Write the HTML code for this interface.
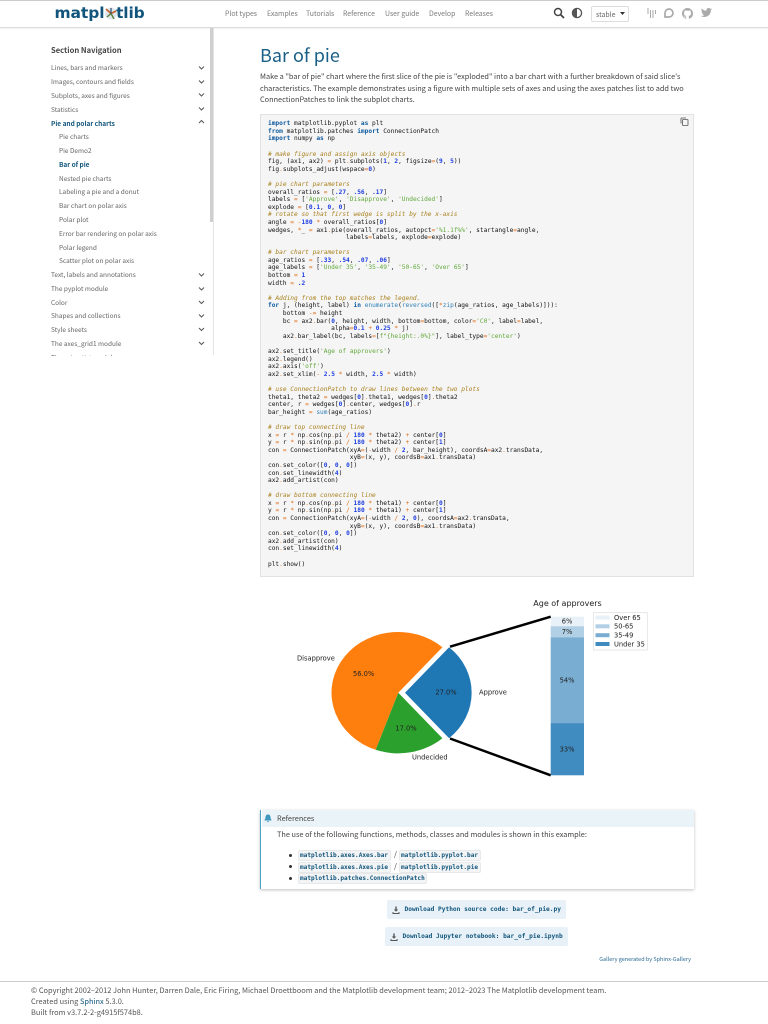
<!DOCTYPE html>
<html lang="en"><head><meta charset="utf-8"><title>Bar of pie</title>
<style>
html,body{margin:0;padding:0;background:#fff}
#p{position:relative;width:768px;height:1024px;overflow:hidden;font-family:"Noto Sans CJK JP","Liberation Sans",sans-serif;color:#444;filter:blur(.3px)}
.a{position:absolute;white-space:nowrap}
.nav{top:6px;height:14px;line-height:14px;font-size:6.9px;color:#7a7a7a}
.s{height:14px;line-height:14px;font-size:6.5px;color:#666;left:51px}
.s2{left:59px}
.t{height:12px;line-height:12px;font-size:7.34px;color:#444}
.f{font-size:7.41px;color:#555}
pre{position:absolute;margin:0;font-family:"DejaVu Sans Mono","Liberation Mono",monospace;font-size:6.18px;line-height:7.586px;color:#111;left:268px;top:120.2px}
.k{color:#0b5a9e;font-weight:bold}.m{color:#1f3fe0;font-weight:bold}.q{color:#62a83c}.c{color:#a9801c;font-style:italic}.o{color:#e0701a}
.chip{position:absolute;height:9px;line-height:9px;background:#f3f4f5;border:.5px solid #e6e8ea;border-radius:2px;font-family:"DejaVu Sans Mono",monospace;font-weight:bold;font-size:6.1px;color:#11557c;padding:0 1.5px;white-space:nowrap}
.dl{position:absolute;background:#e7f1f7;border-radius:2px;font-family:"DejaVu Sans Mono",monospace;font-weight:bold;font-size:6.2px;color:#11557c;white-space:nowrap}
.b{position:absolute;left:289px;width:3px;height:3px;border-radius:50%;background:#333}
</style></head><body><div id="p">

<!-- header -->
<div class="a" style="left:0;top:0;width:768px;height:1px;background:#ccc"></div>
<div class="a" style="left:0;top:27px;width:768px;height:1px;background:#ddd;box-shadow:0 1px 1px #eee"></div>
<div class="a" style="left:54.500px;top:2px;height:22px;line-height:22px;font-family:'DejaVu Sans',sans-serif;font-weight:bold;font-size:15.5px;color:#11557c;letter-spacing:-.1px">matpl<span style="display:inline-block;width:11.500px"></span>tlib</div>
<svg class="a" style="left:103.500px;top:6px" width="14" height="15" viewBox="0 0 14 15"><circle cx="7" cy="7.500" r="6" fill="#dfe8ee"/><path d="M7 7.500L2 3M7 7.500L12 5" stroke="#c4622c" stroke-width="1.600"/><path d="M7 7.500L10 13M7 7.500L3 11" stroke="#5b7f3c" stroke-width="1.400"/><path d="M7 7.500L7 2" stroke="#2d4c70" stroke-width="1.200"/></svg>

<div class="a nav" style="left:225px">Plot types</div>
<div class="a nav" style="left:267px">Examples</div>
<div class="a nav" style="left:306px">Tutorials</div>
<div class="a nav" style="left:343px">Reference</div>
<div class="a nav" style="left:385px">User guide</div>
<div class="a nav" style="left:429px">Develop</div>
<div class="a nav" style="left:465px">Releases</div>

<svg class="a" style="left:553px;top:7px" width="12" height="12" viewBox="0 0 12 12"><circle cx="5" cy="5" r="3.500" fill="none" stroke="#444" stroke-width="1.500"/><path d="M7.600 7.600L11 11" stroke="#444" stroke-width="1.800"/></svg>
<svg class="a" style="left:571px;top:7px" width="12" height="12" viewBox="0 0 12 12"><circle cx="6" cy="6" r="4.600" fill="none" stroke="#555" stroke-width="1.300"/><path d="M6 1.400A4.600 4.600 0 0 0 6 10.600Z" fill="#555"/></svg>
<div class="a" style="left:591px;top:6px;width:36px;height:14px;border:1px solid #ddd;border-radius:2px;line-height:14px;font-size:6.900px;color:#666;text-indent:4px">stable</div>
<svg class="a" style="left:620px;top:12px" width="5" height="3"><path d="M0 0H5L2.500 3Z" fill="#333"/></svg>

<svg class="a" style="left:647px;top:7px" width="10" height="11" viewBox="0 0 10 11" fill="#aaa"><rect x="0.500" y="1" width="1" height="6"/><rect x="3" y="3" width="1" height="8"/><rect x="5.500" y="3" width="1" height="8"/><rect x="8" y="3" width="1" height="4"/></svg>
<svg class="a" style="left:664px;top:8px" width="10" height="10" viewBox="0 0 10 10"><path d="M5 1A4 4 0 1 1 5 9H1V5A4 4 0 0 1 5 1Z" fill="none" stroke="#aaa" stroke-width="1.700"/></svg>
<svg class="a" style="left:682px;top:8px" width="11" height="11" viewBox="0 0 16 16"><path fill="#aaa" d="M8 0C3.58 0 0 3.58 0 8c0 3.54 2.29 6.53 5.47 7.59.4.07.55-.17.55-.38 0-.19-.01-.82-.01-1.49-2.01.37-2.53-.49-2.69-.94-.09-.23-.48-.94-.82-1.13-.28-.15-.68-.52-.01-.53.63-.01 1.08.58 1.23.82.72 1.21 1.87.87 2.33.66.07-.52.28-.87.51-1.07-1.78-.2-3.64-.89-3.64-3.95 0-.87.31-1.59.82-2.15-.08-.2-.36-1.02.08-2.12 0 0 .67-.21 2.2.82.64-.18 1.32-.27 2-.27s1.36.09 2 .27c1.53-1.04 2.2-.82 2.2-.82.44 1.1.16 1.92.08 2.12.51.56.82 1.27.82 2.15 0 3.07-1.87 3.75-3.65 3.95.29.25.54.73.54 1.48 0 1.07-.01 1.93-.01 2.2 0 .21.15.46.55.38A8.01 8.01 0 0016 8c0-4.42-3.58-8-8-8z"/></svg>
<svg class="a" style="left:701px;top:7px" width="11" height="11" viewBox="0 0 512 512"><path fill="#aaa" d="M459.37 151.716c.325 4.548.325 9.097.325 13.645 0 138.72-105.583 298.558-298.558 298.558-59.452 0-114.68-17.219-161.137-47.106 8.447.974 16.568 1.299 25.34 1.299 49.055 0 94.213-16.568 130.274-44.832-46.132-.975-84.792-31.188-98.112-72.772 6.498.974 12.995 1.624 19.818 1.624 9.421 0 18.843-1.3 27.614-3.573-48.081-9.747-84.143-51.98-84.143-102.985v-1.299c13.969 7.797 30.214 12.67 47.431 13.319-28.264-18.843-46.781-51.005-46.781-87.391 0-19.492 5.197-37.36 14.294-52.954 51.655 63.675 129.3 105.258 216.365 109.807-1.624-7.797-2.599-15.918-2.599-24.04 0-57.828 46.782-104.934 104.934-104.934 30.213 0 57.502 12.67 76.67 33.137 23.715-4.548 46.456-13.32 66.599-25.34-7.798 24.366-24.366 44.833-46.132 57.827 21.117-2.273 41.584-8.122 60.426-16.243-14.292 20.791-32.161 39.308-52.628 54.253z"/></svg>

<!-- sidebar -->
<div class="a" style="left:213px;top:28px;width:1px;height:327px;background:#e4e4e4"></div>
<div class="a" style="left:210px;top:28px;width:3px;height:194px;background:#cfcfcf"></div>
<div class="a" style="left:51px;top:44px;height:14px;line-height:14px;font-size:7.600px;font-weight:bold;color:#444">Section Navigation</div>

<div class="a" style="left:0;top:60px;width:213px;height:296px;overflow:hidden">
<div class="a s" style="top:0.2px">Lines, bars and markers</div>
<div class="a s" style="top:13.800px">Images, contours and fields</div>
<div class="a s" style="top:27.800px">Subplots, axes and figures</div>
<div class="a s" style="top:41.500px">Statistics</div>
<div class="a s" style="top:55.500px;color:#11557c;font-weight:bold">Pie and polar charts</div>
<div class="a s s2" style="top:69.200px">Pie charts</div>
<div class="a s s2" style="top:83.200px">Pie Demo2</div>
<div class="a s s2" style="top:96.800px;color:#11557c;font-weight:bold">Bar of pie</div>
<div class="a s s2" style="top:110.500px">Nested pie charts</div>
<div class="a s s2" style="top:124.200px">Labeling a pie and a donut</div>
<div class="a s s2" style="top:138.200px">Bar chart on polar axis</div>
<div class="a s s2" style="top:151.800px">Polar plot</div>
<div class="a s s2" style="top:165.800px">Error bar rendering on polar axis</div>
<div class="a s s2" style="top:179.500px">Polar legend</div>
<div class="a s s2" style="top:192.500px">Scatter plot on polar axis</div>
<div class="a s" style="top:206.800px">Text, labels and annotations</div>
<div class="a s" style="top:220.800px">The pyplot module</div>
<div class="a s" style="top:234.500px">Color</div>
<div class="a s" style="top:247.500px">Shapes and collections</div>
<div class="a s" style="top:262px">Style sheets</div>
<div class="a s" style="top:276px">The axes_grid1 module</div>
<div class="a s" style="top:289.500px">The axisartist module</div>
</div>
<svg class="a" style="left:0;top:0" width="214" height="356" fill="none" stroke="#555" stroke-width="1">
<path d="M199 66.500l2.500 2.500 2.500-2.500M199 80.500l2.500 2.500 2.500-2.500M199 93.500l2.500 2.500 2.500-2.500M199 107.500l2.500 2.500 2.500-2.500M199 123l2.500-2.500 2.500 2.500M199 273.500l2.500 2.500 2.500-2.500M199 287.500l2.500 2.500 2.500-2.500M199 301l2.500 2.500 2.500-2.500M199 314.500l2.500 2.500 2.500-2.500M199 328l2.500 2.500 2.500-2.500M199 342l2.500 2.500 2.500-2.500"/>
</svg>

<!-- main -->
<div class="a" style="left:260px;top:42px;height:26px;line-height:26px;font-size:18px;color:#1a5f87">Bar of pie</div>
<div class="a t" style="left:260px;top:70.500px">Make a "bar of pie" chart where the first slice of the pie is "exploded" into a bar chart with a further breakdown of said slice's</div>
<div class="a t" style="left:260px;top:82.500px">characteristics. The example demonstrates using a figure with multiple sets of axes and using the axes patches list to add two</div>
<div class="a t" style="left:260px;top:94px">ConnectionPatches to link the subplot charts.</div>

<!-- code -->
<div class="a" style="left:260px;top:114px;width:432px;height:461px;background:#f5f5f5;border:1px solid #e2e2e2"></div>
<svg class="a" style="left:680px;top:117px" width="9" height="9" viewBox="0 0 9 9" fill="none" stroke="#555" stroke-width=".8"><rect x="2.500" y="2.500" width="5.500" height="6" rx=".6" fill="#f5f5f5"/><path d="M1 6.500V1.500a.5 .5 0 0 1 .5-.5H6"/></svg>
<pre><span class="k">import</span> matplotlib.pyplot <span class="k">as</span> plt
<span class="k">from</span> matplotlib.patches <span class="k">import</span> ConnectionPatch
<span class="k">import</span> numpy <span class="k">as</span> np

<span class="c"># make figure and assign axis objects</span>
fig, (ax1, ax2) <span class="o">=</span> plt<span class="o">.</span>subplots(<span class="m">1</span>, <span class="m">2</span>, figsize<span class="o">=</span>(<span class="m">9</span>, <span class="m">5</span>))
fig<span class="o">.</span>subplots_adjust(wspace<span class="o">=</span><span class="m">0</span>)

<span class="c"># pie chart parameters</span>
overall_ratios <span class="o">=</span> [<span class="m">.27</span>, <span class="m">.56</span>, <span class="m">.17</span>]
labels <span class="o">=</span> [<span class="q">'Approve'</span>, <span class="q">'Disapprove'</span>, <span class="q">'Undecided'</span>]
explode <span class="o">=</span> [<span class="m">0.1</span>, <span class="m">0</span>, <span class="m">0</span>]
<span class="c"># rotate so that first wedge is split by the x-axis</span>
angle <span class="o">=</span> <span class="o">-</span><span class="m">180</span> <span class="o">*</span> overall_ratios[<span class="m">0</span>]
wedges, <span class="o">*</span>_ <span class="o">=</span> ax1<span class="o">.</span>pie(overall_ratios, autopct<span class="o">=</span><span class="q">'%1.1f%%'</span>, startangle<span class="o">=</span>angle,
                     labels<span class="o">=</span>labels, explode<span class="o">=</span>explode)

<span class="c"># bar chart parameters</span>
age_ratios <span class="o">=</span> [<span class="m">.33</span>, <span class="m">.54</span>, <span class="m">.07</span>, <span class="m">.06</span>]
age_labels <span class="o">=</span> [<span class="q">'Under 35'</span>, <span class="q">'35-49'</span>, <span class="q">'50-65'</span>, <span class="q">'Over 65'</span>]
bottom <span class="o">=</span> <span class="m">1</span>
width <span class="o">=</span> <span class="m">.2</span>

<span class="c"># Adding from the top matches the legend.</span>
<span class="k">for</span> j, (height, label) <span class="k">in</span> <span style="color:#2f7fb8">enumerate</span>(<span style="color:#2f7fb8">reversed</span>([<span class="o">*</span><span style="color:#2f7fb8">zip</span>(age_ratios, age_labels)])):
    bottom <span class="o">-=</span> height
    bc <span class="o">=</span> ax2<span class="o">.</span>bar(<span class="m">0</span>, height, width, bottom<span class="o">=</span>bottom, color<span class="o">=</span><span class="q">'C0'</span>, label<span class="o">=</span>label,
                 alpha<span class="o">=</span><span class="m">0.1</span> <span class="o">+</span> <span class="m">0.25</span> <span class="o">*</span> j)
    ax2<span class="o">.</span>bar_label(bc, labels<span class="o">=</span>[<span class="q">f"{height:.0%}"</span>], label_type<span class="o">=</span><span class="q">'center'</span>)

ax2<span class="o">.</span>set_title(<span class="q">'Age of approvers'</span>)
ax2<span class="o">.</span>legend()
ax2<span class="o">.</span>axis(<span class="q">'off'</span>)
ax2<span class="o">.</span>set_xlim(<span class="o">-</span> <span class="m">2.5</span> <span class="o">*</span> width, <span class="m">2.5</span> <span class="o">*</span> width)

<span class="c"># use ConnectionPatch to draw lines between the two plots</span>
theta1, theta2 <span class="o">=</span> wedges[<span class="m">0</span>]<span class="o">.</span>theta1, wedges[<span class="m">0</span>]<span class="o">.</span>theta2
center, r <span class="o">=</span> wedges[<span class="m">0</span>]<span class="o">.</span>center, wedges[<span class="m">0</span>]<span class="o">.</span>r
bar_height <span class="o">=</span> <span style="color:#2f7fb8">sum</span>(age_ratios)

<span class="c"># draw top connecting line</span>
x <span class="o">=</span> r <span class="o">*</span> np<span class="o">.</span>cos(np<span class="o">.</span>pi <span class="o">/</span> <span class="m">180</span> <span class="o">*</span> theta2) <span class="o">+</span> center[<span class="m">0</span>]
y <span class="o">=</span> r <span class="o">*</span> np<span class="o">.</span>sin(np<span class="o">.</span>pi <span class="o">/</span> <span class="m">180</span> <span class="o">*</span> theta2) <span class="o">+</span> center[<span class="m">1</span>]
con <span class="o">=</span> ConnectionPatch(xyA<span class="o">=</span>(<span class="o">-</span>width <span class="o">/</span> <span class="m">2</span>, bar_height), coordsA<span class="o">=</span>ax2<span class="o">.</span>transData,
                      xyB<span class="o">=</span>(x, y), coordsB<span class="o">=</span>ax1<span class="o">.</span>transData)
con<span class="o">.</span>set_color([<span class="m">0</span>, <span class="m">0</span>, <span class="m">0</span>])
con<span class="o">.</span>set_linewidth(<span class="m">4</span>)
ax2<span class="o">.</span>add_artist(con)

<span class="c"># draw bottom connecting line</span>
x <span class="o">=</span> r <span class="o">*</span> np<span class="o">.</span>cos(np<span class="o">.</span>pi <span class="o">/</span> <span class="m">180</span> <span class="o">*</span> theta1) <span class="o">+</span> center[<span class="m">0</span>]
y <span class="o">=</span> r <span class="o">*</span> np<span class="o">.</span>sin(np<span class="o">.</span>pi <span class="o">/</span> <span class="m">180</span> <span class="o">*</span> theta1) <span class="o">+</span> center[<span class="m">1</span>]
con <span class="o">=</span> ConnectionPatch(xyA<span class="o">=</span>(<span class="o">-</span>width <span class="o">/</span> <span class="m">2</span>, <span class="m">0</span>), coordsA<span class="o">=</span>ax2<span class="o">.</span>transData,
                      xyB<span class="o">=</span>(x, y), coordsB<span class="o">=</span>ax1<span class="o">.</span>transData)
con<span class="o">.</span>set_color([<span class="m">0</span>, <span class="m">0</span>, <span class="m">0</span>])
ax2<span class="o">.</span>add_artist(con)
con<span class="o">.</span>set_linewidth(<span class="m">4</span>)

plt<span class="o">.</span>show()</pre>

<!-- chart -->
<svg class="a" style="left:0;top:590px" width="768" height="200" viewBox="0 590 768 200" font-family="'DejaVu Sans',sans-serif" fill="#222">
<path d="M398.300 692.700L442.400 647.200A66.700 60.700 0 1 0 375.700 749.800Z" fill="#ff7f0e"/>
<path d="M398.300 692.700L375.700 749.800A66.700 60.700 0 0 0 442.400 738.200Z" fill="#2ca02c"/>
<path d="M405 692.700L449.100 647.200A66.700 60.700 0 0 1 449.100 738.200Z" fill="#1f77b4"/>
<path d="M450 646.700L550.700 616.700M450 738.500L550.700 775.300" stroke="#000" stroke-width="2.500" fill="none"/>
<rect x="550.700" y="616.700" width="33.300" height="9.600" fill="#1f77b4" fill-opacity=".1"/>
<rect x="550.700" y="626.300" width="33.300" height="11.100" fill="#1f77b4" fill-opacity=".35"/>
<rect x="550.700" y="637.400" width="33.300" height="85.700" fill="#1f77b4" fill-opacity=".6"/>
<rect x="550.700" y="723.100" width="33.300" height="52.200" fill="#1f77b4" fill-opacity=".85"/>
<rect x="593.300" y="612.700" width="54" height="37.300" fill="#fff" stroke="#ddd" stroke-width=".7"/>
<rect x="595.500" y="615.500" width="14" height="4" fill="#1f77b4" fill-opacity=".1"/>
<rect x="595.500" y="624.300" width="14" height="4" fill="#1f77b4" fill-opacity=".35"/>
<rect x="595.500" y="633.200" width="14" height="4" fill="#1f77b4" fill-opacity=".6"/>
<rect x="595.500" y="642" width="14" height="4" fill="#1f77b4" fill-opacity=".85"/>
<g font-size="6.700">
<text x="614" y="619.800">Over 65</text><text x="614" y="628.600">50-65</text><text x="614" y="637.500">35-49</text><text x="614" y="646.300">Under 35</text>
<text x="297" y="660.500">Disapprove</text><text x="479" y="694.500">Approve</text><text x="412" y="759.500">Undecided</text>
<g text-anchor="middle"><text x="363.600" y="676">56.0%</text><text x="446" y="694.500">27.0%</text><text x="406" y="730.500">17.0%</text>
<text x="567" y="623.500">6%</text><text x="567" y="634">7%</text><text x="567" y="682.500">54%</text><text x="567" y="751.500">33%</text></g>
</g>
<text x="567.500" y="606" font-size="8" text-anchor="middle">Age of approvers</text>
</svg>

<!-- admonition -->
<div class="a" style="left:260px;top:810px;width:434px;height:79px;background:#fff;box-shadow:0 1px 3px rgba(0,0,0,.25);border-left:1.500px solid #4ba3c7;box-sizing:border-box"></div>
<div class="a" style="left:261.500px;top:810px;width:432.500px;height:17px;background:#eaf3f7"></div>
<svg class="a" style="left:264px;top:814px" width="8" height="9" viewBox="0 0 8 9"><path d="M4 0.500C2.300 0.500 1.500 1.800 1.500 3.300C1.500 5 .5 5.500 .5 6.500H7.500C7.500 5.500 6.500 5 6.500 3.300C6.500 1.800 5.700 .5 4 .5ZM3 7.200A1 1 0 0 0 5 7.200Z" fill="#3e97bd"/></svg>
<div class="a t" style="left:277px;top:812.500px">References</div>
<div class="a t" style="left:277px;top:829px">The use of the following functions, methods, classes and modules is shown in this example:</div>
<div class="b" style="top:853.500px"></div><div class="b" style="top:865px"></div><div class="b" style="top:876.500px"></div>
<div class="chip" style="left:297.500px;top:850px">matplotlib.axes.Axes.bar</div>
<div class="a t" style="left:394px;top:849px">/</div>
<div class="chip" style="left:398.500px;top:850px">matplotlib.pyplot.bar</div>
<div class="chip" style="left:297.500px;top:862px">matplotlib.axes.Axes.pie</div>
<div class="a t" style="left:394px;top:861px">/</div>
<div class="chip" style="left:398.500px;top:862px">matplotlib.pyplot.pie</div>
<div class="chip" style="left:297.500px;top:873px">matplotlib.patches.ConnectionPatch</div>

<!-- downloads -->
<div class="dl" style="left:387px;top:900px;width:179px;height:19px;line-height:19px;text-indent:17.500px">Download Python source code: bar_of_pie.py</div>
<div class="dl" style="left:385px;top:927px;width:183px;height:19px;line-height:19px;text-indent:17.500px">Download Jupyter notebook: bar_of_pie.ipynb</div>
<svg class="a" style="left:392px;top:906px" width="8" height="8" viewBox="0 0 8 8"><path d="M3.300 .5H4.700V3.500H6.200L4 5.800L1.800 3.500H3.300ZM.5 6H1.500V7H6.500V6H7.500V8H.5Z" fill="#555"/></svg>
<svg class="a" style="left:390px;top:933px" width="8" height="8" viewBox="0 0 8 8"><path d="M3.300 .5H4.700V3.500H6.200L4 5.800L1.800 3.500H3.300ZM.5 6H1.500V7H6.500V6H7.500V8H.5Z" fill="#555"/></svg>
<div class="a" style="right:77px;top:953px;height:12px;line-height:12px;font-size:5.500px;color:#2a6a92">Gallery generated by Sphinx-Gallery</div>

<!-- footer -->
<div class="a" style="left:0;top:981px;width:768px;height:1px;background:#ccc"></div>
<div class="a t f" style="left:31px;top:984.500px">© Copyright 2002–2012 John Hunter, Darren Dale, Eric Firing, Michael Droettboom and the Matplotlib development team; 2012–2023 The Matplotlib development team.</div>
<div class="a t f" style="left:31px;top:995.500px">Created using <span style="color:#11557c">Sphinx</span> 5.3.0.</div>
<div class="a t f" style="left:31px;top:1007px">Built from v3.7.2-2-g4915f574b8.</div>
</div></body></html>
